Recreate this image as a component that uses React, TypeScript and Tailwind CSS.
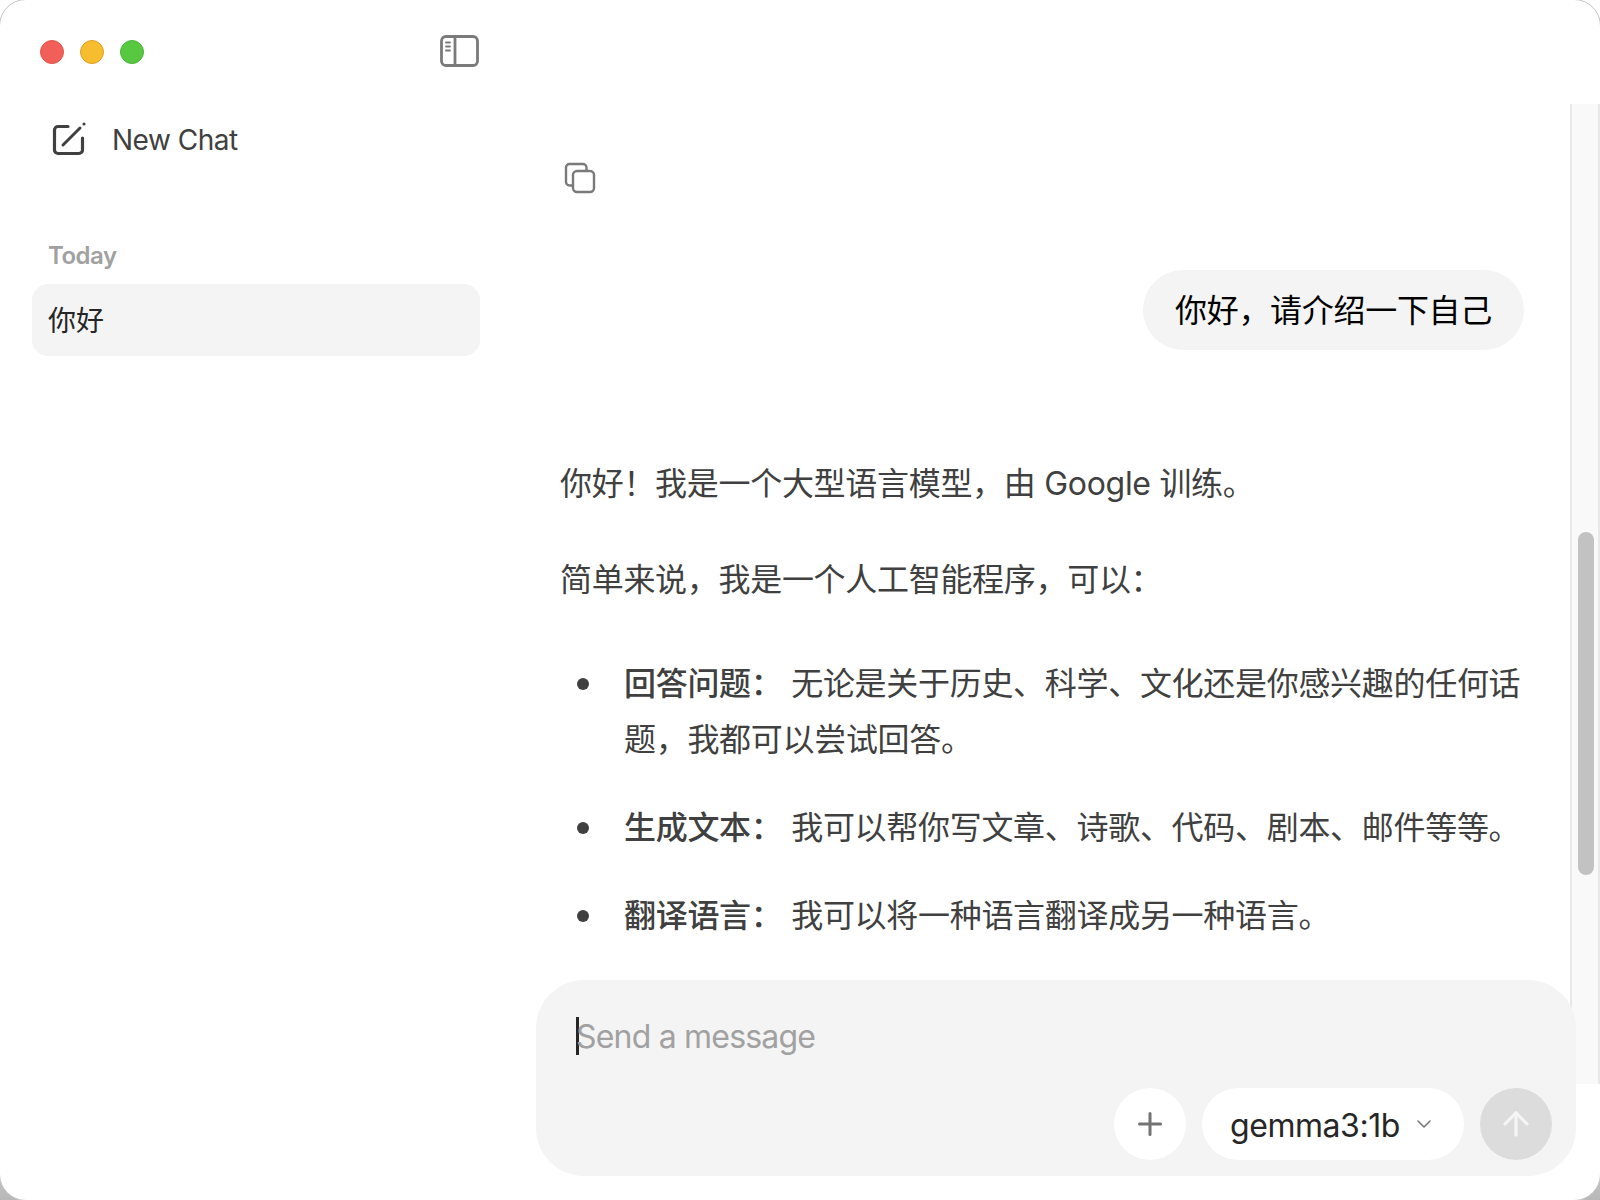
import React from 'react';
import { ArrowUp, ChevronDown, Plus } from 'lucide-react';

const ComposeIcon = () => (
  <svg width="36" height="36" viewBox="0 0 36 36" fill="none" stroke="#404040" strokeLinecap="round" strokeLinejoin="round">
    <path d="M17 6.500H7A3.500 3.500 0 0 0 3.500 10v20A3.500 3.500 0 0 0 7 33.500h21a3.500 3.500 0 0 0 3.500-3.500V18" strokeWidth="3.200" />
    <path d="M12 25 29 8" strokeWidth="3" />
    <circle cx="33" cy="4" r="1.600" fill="#404040" stroke="none" />
  </svg>
);

const SidebarIcon = () => (
  <svg width="39" height="32" viewBox="0 0 39 32" fill="none" stroke="#7a7a7a" strokeLinecap="round">
    <rect x="1.500" y="1.500" width="36" height="29" rx="4.500" strokeWidth="2.800" />
    <path d="M15 2v28" strokeWidth="2.800" />
    <path d="M6 7.500h4M6 11.500h4M6 15.500h4" strokeWidth="1.800" />
  </svg>
);

const CopyIcon = () => (
  <svg width="32" height="32" viewBox="0 0 32 32" fill="none" stroke="#7a7a7a" strokeWidth="2.400">
    <path d="M8 23.500H5.500A3.500 3.500 0 0 1 2 20V5.500A3.500 3.500 0 0 1 5.500 2H19a3.500 3.500 0 0 1 3.500 3.500V9" />
    <rect x="9" y="9" width="21" height="21" rx="4" fill="#ffffff" />
  </svg>
);

const ListItem = ({ title, children }: { title: string; children: React.ReactNode }) => (
  <li className="flex">
    <div className="flex h-14 w-16 shrink-0 items-center pl-[17px]">
      <span className="h-3 w-3 rounded-full bg-neutral-700" />
    </div>
    <p className="w-[910px]">
      <strong className="font-medium">{title}</strong> {children}
    </p>
  </li>
);

export default function App() {
  return (
    <div className="h-[1200px] w-[1600px] overflow-hidden bg-[linear-gradient(#ffffff_85%,#b8b8b8)]">
      <div
        className="-m-px flex h-[1202px] w-[1602px] overflow-hidden rounded-[27px] border border-[#c4c4c4] bg-white text-neutral-700"
        style={{ fontFamily: 'Inter, "Noto Sans CJK SC", sans-serif' }}
        lang="zh-CN"
      >
        {/* Sidebar */}
        <aside className="flex w-[512px] shrink-0 flex-col pl-8">
          <div className="flex h-[104px] items-center">
            <div className="ml-2 flex gap-4">
              <span className="h-6 w-6 rounded-full border border-[#e0534c] bg-[#f25f58]" />
              <span className="h-6 w-6 rounded-full border border-[#dfa023] bg-[#f6bd2e]" />
              <span className="h-6 w-6 rounded-full border border-[#48b53a] bg-[#57c83f]" />
            </div>
            <div className="mb-[2px] ml-[296px]">
              <SidebarIcon />
            </div>
          </div>
          <button className="mt-[14px] flex items-center pl-[19px] text-[28px] leading-9 tracking-[-0.5px] text-neutral-700">
            <ComposeIcon />
            <span className="ml-[25px] mt-[4px]">New Chat</span>
          </button>
          <div className="mt-[82px] pl-[16px] text-[24px] font-semibold leading-8 tracking-[-0.5px] text-neutral-400">Today</div>
          <div className="mt-[12px] flex h-[72px] w-[448px] items-center rounded-2xl bg-[#f4f4f4] pl-[16px] pt-[2px] text-[28px] text-neutral-800">
            你好
          </div>
        </aside>

        {/* Main column */}
        <main className="relative flex min-w-0 flex-1 flex-col">
          <div className="h-[104px] shrink-0" />
          <div className="flex min-h-0 flex-1">
            <div className="flex-1 pl-12 text-[32px] leading-14 tracking-[-0.3px]">
              <div className="ml-[4px] mt-[58px]">
                <CopyIcon />
              </div>
              <div className="mt-[76px] flex justify-end pr-[46px]">
                <div className="rounded-[40px] bg-[#f4f4f4] px-8 pb-[11px] pt-[13px] text-black">你好，请介绍一下自己</div>
              </div>
              <p className="mt-[106px]">你好！我是一个大型语言模型，由 Google 训练。</p>
              <p className="mt-10">简单来说，我是一个人工智能程序，可以：</p>
              <ul className="mt-12 flex flex-col gap-8">
                <ListItem title="回答问题：">无论是关于历史、科学、文化还是你感兴趣的任何话题，我都可以尝试回答。</ListItem>
                <ListItem title="生成文本：">我可以帮你写文章、诗歌、代码、剧本、邮件等等。</ListItem>
                <ListItem title="翻译语言：">我可以将一种语言翻译成另一种语言。</ListItem>
              </ul>
            </div>
            {/* Scrollbar */}
            <div className="mb-[116px] w-[30px] shrink-0 border-x-2 border-x-[#e8e8e8] bg-[#f9f9f9] pl-[6px] pt-[428px]">
              <div className="h-[343px] w-4 rounded-full bg-[#c2c2c2]" />
            </div>
          </div>

          {/* Composer */}
          <div className="absolute left-6 top-[980px] flex h-[196px] w-[1040px] flex-col rounded-[48px] bg-[#f4f4f4] pb-4 pl-10 pr-6">
            <div className="mt-[37px] flex h-[38px] items-center text-[32px] tracking-[-0.8px] text-neutral-400">
              <span className="-mr-[3px] h-[38px] w-[3px] bg-neutral-800" />
              <span className="mt-[2px]">Send a message</span>
            </div>
            <div className="mt-auto flex items-center justify-end gap-4">
              <button className="flex h-[72px] w-[72px] items-center justify-center rounded-full bg-white text-neutral-500">
                <Plus size={36} strokeWidth={2} />
              </button>
              <button className="flex h-[72px] w-[262px] items-center rounded-full bg-white pl-7 text-[32px] tracking-[-0.45px] text-neutral-800">
                <span className="mt-[3px]">gemma3:1b</span>
                <ChevronDown className="ml-[12px]  text-neutral-500" size={24} strokeWidth={1.500} />
              </button>
              <button className="flex h-[72px] w-[72px] items-center justify-center rounded-full bg-[#dcdcdc] text-neutral-100">
                <ArrowUp size={38} strokeWidth={2} />
              </button>
            </div>
          </div>
        </main>
      </div>
    </div>
  );
}
